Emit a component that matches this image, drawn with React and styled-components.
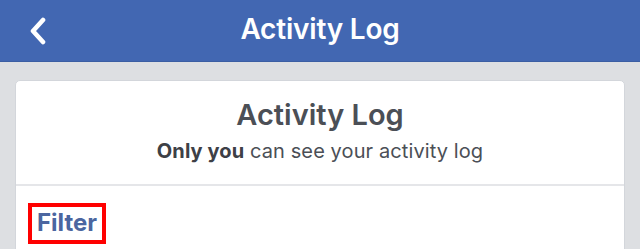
import React from "react"
import styled, { createGlobalStyle } from "styled-components"

const Global = createGlobalStyle`
  html, body {
    margin: 0;
    padding: 0;
    background: #dddfe2;
    font-family: Inter, "Noto Sans", "Liberation Sans", sans-serif;
    overflow: hidden;
  }
`

const Page = styled.div`
  width: 640px;
  height: 249px;
  overflow: hidden;
  background: #dddfe2;
`

const TopBar = styled.header`
  height: 62px;
  background: #4267b2;
  border-bottom: 1px solid #3b5ea3;
  box-sizing: border-box;
  display: grid;
  grid-template-columns: 80px 1fr 80px;
  align-items: center;
`

const BackButton = styled.button`
  border: none;
  background: none;
  padding: 0 0 0 28px;
  height: 100%;
  display: flex;
  align-items: center;
  cursor: pointer;
`

const BarTitle = styled.h1`
  margin: 0;
  text-align: center;
  color: #fff;
  font-size: 28px;
  font-weight: 600;
  letter-spacing: -0.2px;
  padding-bottom: 4px;
`

const Content = styled.main`
  padding: 18px 15px 0 15px;
`

const Card = styled.section`
  background: #fff;
  border: 1px solid #d3d6db;
  border-radius: 5px;
  height: 200px;
`

const CardHead = styled.div`
  text-align: center;
  padding: 16px 0 21px;
  border-bottom: 2px solid #e5e6e9;
`

const CardTitle = styled.h2`
  margin: 0;
  font-size: 29px;
  font-weight: 600;
  color: #4b4f56;
  line-height: 36px;
`

const Subtitle = styled.p`
  margin: 6px 0 0;
  font-size: 20px;
  letter-spacing: 0.1px;
  color: #4b4f56;
  line-height: 24px;

  b {
    font-weight: 700;
    color: #3d4046;
  }
`

const FilterRow = styled.div`
  padding: 17px 12px;
`

const FilterLink = styled.a`
  display: inline-block;
  border: 4px solid #f00;
  padding: 2px 5px 3px 5px;
  color: #4b66a0;
  font-size: 24px;
  font-weight: 700;
  line-height: 28px;
  text-decoration: none;
  cursor: pointer;
`

const Chevron = () => (
  <svg width="20" height="28" viewBox="0 0 20 28">
    <path d="M15 3 L5 14 L15 25" fill="none" stroke="#fff" strokeWidth="4.6" strokeLinecap="round" strokeLinejoin="round" />
  </svg>
)

export default function App() {
  return (
    <Page>
      <Global />
      <TopBar>
        <BackButton aria-label="Back"><Chevron /></BackButton>
        <BarTitle>Activity Log</BarTitle>
        <span />
      </TopBar>
      <Content>
        <Card>
          <CardHead>
            <CardTitle>Activity Log</CardTitle>
            <Subtitle><b>Only you</b> can see your activity log</Subtitle>
          </CardHead>
          <FilterRow>
            <FilterLink>Filter</FilterLink>
          </FilterRow>
        </Card>
      </Content>
    </Page>
  )
}
